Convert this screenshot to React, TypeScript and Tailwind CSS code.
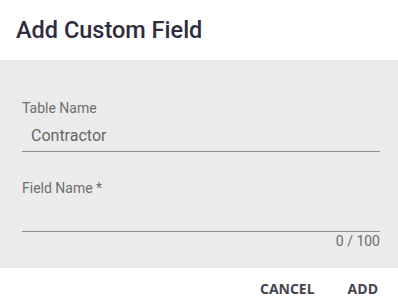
import React from "react";

// Add Custom Field dialog — 헤더 / 회색 폼 패널 / 하단 액션 버튼.
const ROBOTO = { fontFamily: "Roboto, 'Liberation Sans', sans-serif" };

export default function App() {
  return (
    <div className="h-[303px] w-[398px] overflow-hidden bg-white" style={ROBOTO}>
      <header className="flex h-[60px] items-center pl-[16px]">
        <h2 className="text-[23.5px] font-medium leading-8 text-[#2e2c3e]">Add Custom Field</h2>
      </header>

      <section className="bg-[#ebebeb] pb-[18px] pl-[22px] pr-[18px] pt-[38px]">
        <label className="block text-[14px] leading-5 text-[#6e6e6e]">Table Name</label>
        <div className="flex h-[34px] items-end border-b border-[#8e8e96] pb-[5px] pl-[9px]">
          <span className="text-[16px] leading-5 text-[#666666]">Contractor</span>
        </div>

        <label className="mt-[26px] block text-[14px] leading-5 text-[#6e6e6e]">Field Name *</label>
        <div className="h-[34px] border-b border-[#8e8e96]" />
        <div className="mt-[1px] text-right text-[14px] leading-[17px] text-[#6e6e6e]">0 / 100</div>
      </section>

      <footer
        className="flex justify-end pr-[4px] pt-[2px]"
        style={{ fontFamily: "'Open Sans', 'Liberation Sans', sans-serif" }}
      >
        <button className="h-9 px-4 text-[14px] font-bold text-[#45444f]">CANCEL</button>
        <button className="ml-[1px] h-9 px-4 text-[14px] font-bold text-[#45444f]">ADD</button>
      </footer>
    </div>
  );
}
